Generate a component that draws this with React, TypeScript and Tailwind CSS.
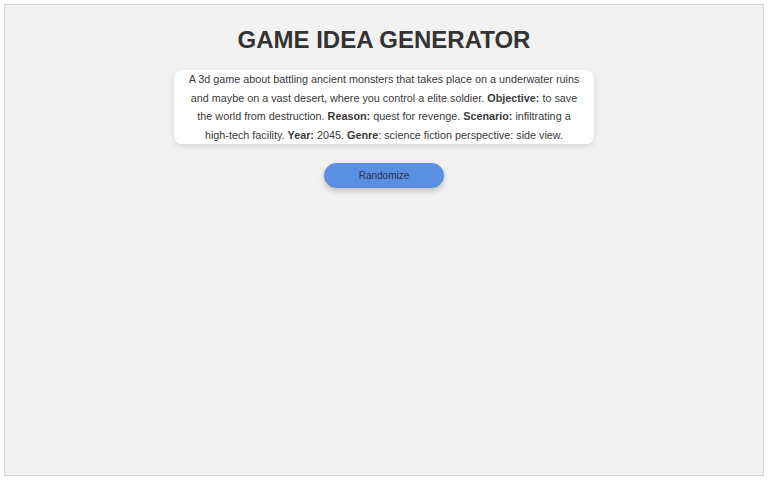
export default function App() {
  return (
    <div className="h-[480px] w-[768px] bg-white p-1 font-['Liberation_Sans',Arial,sans-serif]">
      <div className="flex h-full flex-col items-center border border-[#d6d6d6] bg-[#f2f2f2]">
        <h1 className="mt-[20px] text-[24px] font-bold leading-[30px] text-[#333]">
          GAME IDEA GENERATOR
        </h1>

        <div className="mt-[15px] w-[420px] rounded-lg bg-white px-[10px] shadow-[0_2px_6px_rgba(0,0,0,0.12)]">
          <p className="text-center text-[10.8px] leading-[18.5px] text-[#3a3a3a]">
            A 3d game about battling ancient monsters that takes place on a underwater ruins and
            maybe on a vast desert, where you control a elite soldier. <b>Objective:</b> to save the
            world from destruction. <b>Reason:</b> quest for revenge. <b>Scenario:</b> infiltrating a
            high-tech facility. <b>Year:</b> 2045. <b>Genre</b>: science fiction perspective: side
            view.
          </p>
        </div>

        <button className="mt-[19px] h-[25px] w-[120px] rounded-full bg-[#5b8fe2] text-[10px] text-[#2a3650] shadow-[0_3px_6px_rgba(0,0,0,0.22)]">
          Randomize
        </button>
      </div>
    </div>
  );
}
